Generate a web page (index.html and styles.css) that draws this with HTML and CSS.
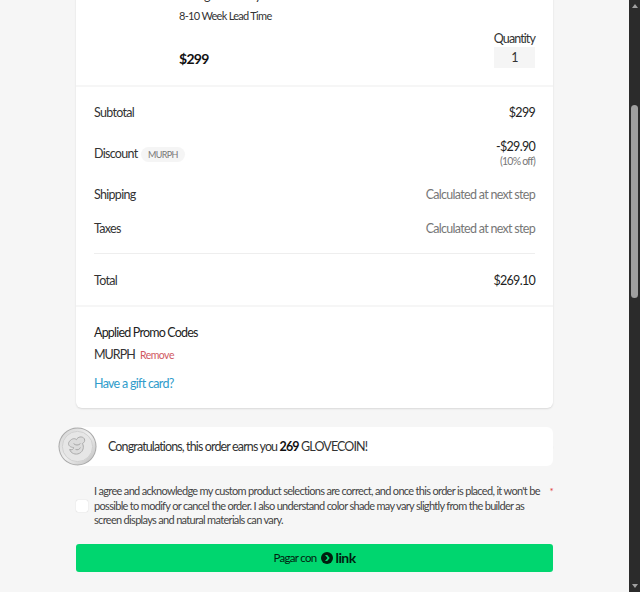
FILE: index.html
```html
<!DOCTYPE html>
<html lang="en">
<head>
  <meta charset="UTF-8">
  <title>Checkout</title>
  <link rel="stylesheet" href="styles.css">
</head>
<body>

<div class="scrollbar">
  <span class="arrow up"></span>
  <span class="thumb"></span>
  <span class="arrow down"></span>
</div>

<main class="page">
  <section class="card">
    <div class="product">
      <div class="product-info">
        <p class="option">Lacing: Pale Gray</p>
        <p class="lead">8-10 Week Lead Time</p>
        <p class="price">$299</p>
      </div>
      <div class="qty">
        <span>Quantity</span>
        <div class="qty-box">1</div>
      </div>
    </div>

    <div class="totals">
      <div class="row"><span>Subtotal</span><span class="dark">$299</span></div>
      <div class="row discount">
        <span>Discount <em class="pill">MURPH</em></span>
        <span class="discount-val"><span class="dark">-$29.90</span><small>(10% off)</small></span>
      </div>
      <div class="row"><span>Shipping</span><span class="muted">Calculated at next step</span></div>
      <div class="row"><span>Taxes</span><span class="muted">Calculated at next step</span></div>
      <hr>
      <div class="row total"><span>Total</span><span class="dark">$269.10</span></div>
    </div>

    <div class="promo">
      <h4>Applied Promo Codes</h4>
      <p class="code">MURPH <a class="remove">Remove</a></p>
      <a class="gift">Have a gift card?</a>
    </div>
  </section>

  <section class="earn">
    <svg class="coin" viewBox="0 0 40 40" width="39" height="39">
      <defs>
        <linearGradient id="silver" x1="0" y1="0" x2="1" y2="1">
          <stop offset="0" stop-color="#d2d2d2"/>
          <stop offset="0.5" stop-color="#efefef"/>
          <stop offset="1" stop-color="#bdbdbd"/>
        </linearGradient>
      </defs>
      <circle cx="20" cy="20" r="19.5" fill="#a8a8a8"/>
      <circle cx="20" cy="20" r="18.5" fill="url(#silver)"/>
      <circle cx="20" cy="20" r="15.5" fill="#e6e6e6" stroke="#d0d0d0"/>
      <path d="M11 16c2-4 6-5 8-3 1-3 6-4 8-1 1 2 0 4-2 5 2 3 1 8-3 10-4 2-9 0-10-4 2 1 4 0 4-2-3 0-6-2-5-5z" fill="#dcdcdc" stroke="#a8a8a8"/>
      <path d="M16 17c2 2 5 2 7 0M18 23c2 1 4 0 5-2" fill="none" stroke="#a4a4a4"/>
    </svg>
    <p>Congratulations, this order earns you <b>269</b> GLOVECOIN!</p>
  </section>

  <label class="agree">
    <span class="check"></span>
    <span class="agree-text">I agree and acknowledge my custom product selections are correct, and once this order is placed, it won't be<br>possible to modify or cancel the order. I also understand color shade may vary slightly from the builder as<br>screen displays and natural materials can vary.</span>
    <span class="req">*</span>
  </label>

  <button class="pay">
    <span>Pagar con</span>
    <svg viewBox="0 0 12 12" width="12" height="12"><circle cx="6" cy="6" r="6" fill="#011e0f"/><path d="M4 3h2.2L8.7 6 6.2 9H4l2.5-3z" fill="#00d66f"/></svg>
    <b>link</b>
  </button>
</main>

</body>
</html>
```

FILE: styles.css
```css
* {
  box-sizing: border-box;
}
html, body {
  margin: 0;
  height: 100%;
  overflow: hidden;
}
body {
  font-family: "Lato", "Noto Sans", sans-serif;
  font-size: 12.5px;
  letter-spacing: -0.7px;
  color: #333;
  background: #f6f6f6;
}
p, h4 {
  margin: 0;
  font-weight: normal;
}

.page {
  width: 630px;
  margin-top: -12px;
  padding: 0 77px 0 76px;
}

.scrollbar {
  position: fixed;
  top: 0;
  right: 0;
  bottom: 0;
  width: 11px;
  background: #2b2b2b;
}
.arrow {
  position: absolute;
  left: 3px;
  border-left: 3px solid transparent;
  border-right: 3px solid transparent;
}
.arrow.up {
  top: 4px;
  border-bottom: 4px solid #a0a0a0;
}
.arrow.down {
  bottom: 4px;
  border-top: 4px solid #a0a0a0;
}
.thumb {
  position: absolute;
  top: 105px;
  left: 2px;
  width: 7px;
  height: 193px;
  border-radius: 4px;
  background: #9f9f9f;
}

.card {
  background: #fff;
  border-radius: 0 0 6px 6px;
  box-shadow: 0 1px 2px rgba(0,0,0,.12);
}

.product {
  display: flex;
  justify-content: space-between;
  padding: 0 18px 0 103px;
  height: 99px;
  border-bottom: 2px solid #f6f6f6;
}
.product-info p {
  line-height: 16px;
}
.lead {
  margin-top: 4px;
  font-size: 11px;
}
.price {
  margin-top: 27px;
  font-size: 14px;
  font-weight: bold;
  color: #111;
}
.qty {
  display: flex;
  flex-direction: column;
  align-items: flex-end;
  padding-top: 43px;
  letter-spacing: -0.9px;
}
.qty-box {
  width: 41px;
  height: 21px;
  margin-top: 1px;
  background: #f5f5f5;
  text-align: center;
  line-height: 21px;
}

.totals {
  padding: 16px 18px 0 18px;
}
.row {
  display: flex;
  justify-content: space-between;
  align-items: center;
  height: 20px;
  margin-bottom: 14px;
  line-height: 20px;
}
.row.discount {
  height: 34px;
  margin: 0 0 14px;
}
.dark {
  color: #222;
}
.muted {
  color: #777;
}
.pill {
  display: inline-block;
  margin-left: 1px;
  padding: 0 7px;
  border-radius: 9px;
  background: #f5f5f5;
  color: #777;
  font-style: normal;
  font-size: 9px;
  letter-spacing: -0.6px;
  line-height: 15px;
}
.discount-val {
  display: flex;
  flex-direction: column;
  align-items: flex-end;
  line-height: 15px;
}
.discount-val small {
  font-size: 10.5px;
  letter-spacing: -0.8px;
  color: #777;
}
.totals hr {
  margin: 2px 0 0;
  border: 0;
  border-top: 1px solid #eee;
}
.row.total {
  margin: 17px 0 14px;
}

.promo {
  padding: 16px 18px 14px;
  border-top: 2px solid #f6f6f6;
}
.promo h4 {
  color: #222;
  line-height: 20px;
  letter-spacing: -0.8px;
}
.code {
  margin-top: 2px;
  line-height: 20px;
  letter-spacing: -1px;
}
.remove {
  margin-left: 3px;
  font-size: 10.5px;
  letter-spacing: -0.5px;
  color: #d0595f;
}
.gift {
  display: block;
  margin-top: 9px;
  line-height: 20px;
  color: #2f9ccb;
}

.earn {
  display: flex;
  align-items: center;
  gap: 11px;
  height: 39px;
  margin: 19px 0 0 -18px;
  background: linear-gradient(to right, transparent 18px, #fff 18px);
  border-radius: 6px;
  box-shadow: 18px 1px 1px -18px rgba(0,0,0,.12);
  letter-spacing: -0.87px;
}
.earn b {
  color: #111;
}

.agree {
  display: flex;
  align-items: center;
  margin-top: 18px;
  line-height: 14.5px;
  font-size: 11px;
  letter-spacing: -0.68px;
  color: #444;
}
.check {
  flex: none;
  width: 12px;
  height: 12px;
  margin-right: 6px;
  border-radius: 2px;
  background: #fff;
  box-shadow: 0 0 1px rgba(0,0,0,.25);
}
.agree-text {
  flex: 1;
  white-space: nowrap;
}
.req {
  align-self: flex-start;
  margin-left: 6px;
  color: #e23c3c;
  font-size: 10px;
}

.pay {
  display: flex;
  align-items: center;
  justify-content: center;
  gap: 3px;
  width: 100%;
  height: 28px;
  margin-top: 16px;
  border: 0;
  border-radius: 3px;
  background: #00d66f;
  color: #011e0f;
  font-family: inherit;
  font-size: 11.5px;
  letter-spacing: -0.7px;
}
.pay svg {
  margin-left: 1px;
}
.pay b {
  font-size: 14px;
  letter-spacing: -0.6px;
}
```
